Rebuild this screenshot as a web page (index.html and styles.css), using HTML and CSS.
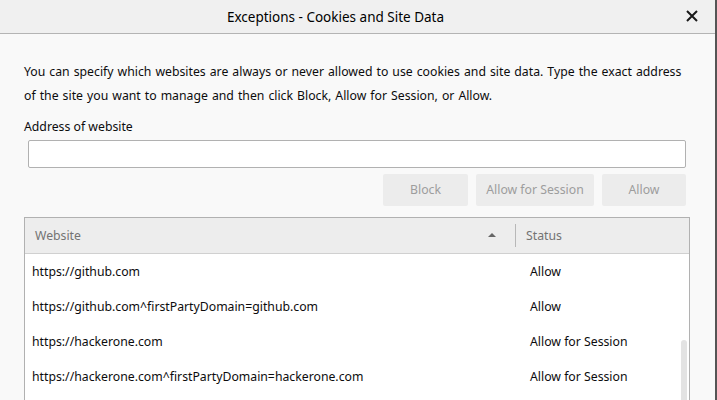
FILE: index.html
```html
<!DOCTYPE html>
<html>
<head>
<meta charset="utf-8">
<link rel="stylesheet" href="styles.css">
</head>
<body>
<div class="window">
  <div class="titlebar">
    <span class="title">Exceptions - Cookies and Site Data</span>
    <svg class="close" width="12" height="12" viewBox="0 0 12 12"><path d="M1 1L11 11M11 1L1 11" stroke="#1a1a1a" stroke-width="2" fill="none"/></svg>
  </div>
  <div class="content">
    <p class="desc">You can specify which websites are always or never allowed to use cookies and site data. Type the exact address of the site you want to manage and then click Block, Allow for Session, or Allow.</p>
    <div class="label">Address of website</div>
    <div class="input"></div>
    <div class="buttons">
      <div class="btn btn-block">Block</div>
      <div class="btn btn-session">Allow for Session</div>
      <div class="btn btn-allow">Allow</div>
    </div>
    <div class="table">
      <div class="thead">
        <div class="th th-site">Website<span class="sort"></span></div>
        <div class="th th-status">Status</div>
      </div>
      <div class="tbody">
        <div class="row"><span class="c-site">https://github.com</span><span class="c-status">Allow</span></div>
        <div class="row"><span class="c-site">https://github.com^firstPartyDomain=github.com</span><span class="c-status">Allow</span></div>
        <div class="row"><span class="c-site">https://hackerone.com</span><span class="c-status">Allow for Session</span></div>
        <div class="row"><span class="c-site">https://hackerone.com^firstPartyDomain=hackerone.com</span><span class="c-status">Allow for Session</span></div>
        <div class="scrollthumb"></div>
      </div>
    </div>
  </div>
</div>
</body>
</html>
```
FILE: styles.css
```css
html, body {
  margin: 0;
  padding: 0;
  width: 717px;
  height: 400px;
  overflow: hidden;
  background: #f9f9f9;
}
body {
  font-family: "Noto Sans", "Open Sans", sans-serif;
  font-size: 12.25px;
  color: #0c0c0d;
}
.window {
  width: 715px;
  height: 400px;
  border-right: 2px solid #555;
  display: flex;
  flex-direction: column;
}
.titlebar {
  height: 33px;
  flex: none;
  background: #f0f0f0;
  border-bottom: 1px solid #b4b4b4;
  display: flex;
  align-items: center;
  justify-content: center;
  position: relative;
}
.title {
  font-size: 13.5px;
  color: #000;
  margin-right: 44px;
}
.close {
  position: absolute;
  right: 17px;
  top: 10px;
}
.content {
  padding: 26px 25px 0 24px;
  flex: 1;
  display: flex;
  flex-direction: column;
  min-height: 0;
}
.desc {
  margin: 0;
  line-height: 24px;
  max-width: 665px;
  word-spacing: 0.85px;
}
.label {
  margin-top: 7px;
  line-height: 24px;
}
.input {
  margin: 1px 4px 0 4px;
  height: 26px;
  background: #fff;
  border: 1px solid #b1b1b1;
  border-radius: 2px;
}
.buttons {
  display: flex;
  justify-content: flex-end;
  gap: 8px;
  margin: 6px 4px 0 4px;
}
.btn {
  height: 32px;
  line-height: 32px;
  background: #ececec;
  color: #9d9d9d;
  text-align: center;
  border-radius: 2px;
}
.btn-block { width: 85px; }
.btn-session { width: 118px; }
.btn-allow { width: 84px; }
.table {
  margin-top: 11px;
  border: 1px solid #b1b1b1;
  border-bottom: none;
  background: #fff;
  flex: 1;
  min-height: 0;
  display: flex;
  flex-direction: column;
}
.thead {
  height: 35px;
  background: #ededed;
  border-bottom: 1px solid #d0d0d0;
  display: flex;
  align-items: center;
  color: #737373;
  flex: none;
}
.th-site {
  width: 480px;
  padding-left: 10px;
  height: 23px;
  line-height: 23px;
  border-right: 1px solid #b8b8b8;
  position: relative;
}
.sort {
  position: absolute;
  right: 19px;
  top: 9px;
  width: 0;
  height: 0;
  border-left: 4px solid transparent;
  border-right: 4px solid transparent;
  border-bottom: 4px solid #666;
}
.th-status {
  padding-left: 10px;
}
.tbody {
  position: relative;
  flex: 1;
}
.row {
  height: 35px;
  display: flex;
  align-items: center;
}
.c-site {
  width: 498px;
  padding-left: 7px;
}
.c-status {
  flex: 1;
}
.scrollthumb {
  position: absolute;
  right: 2px;
  top: 86px;
  width: 6px;
  height: 70px;
  background: #e3e3e3;
  border-radius: 3px;
}
```
